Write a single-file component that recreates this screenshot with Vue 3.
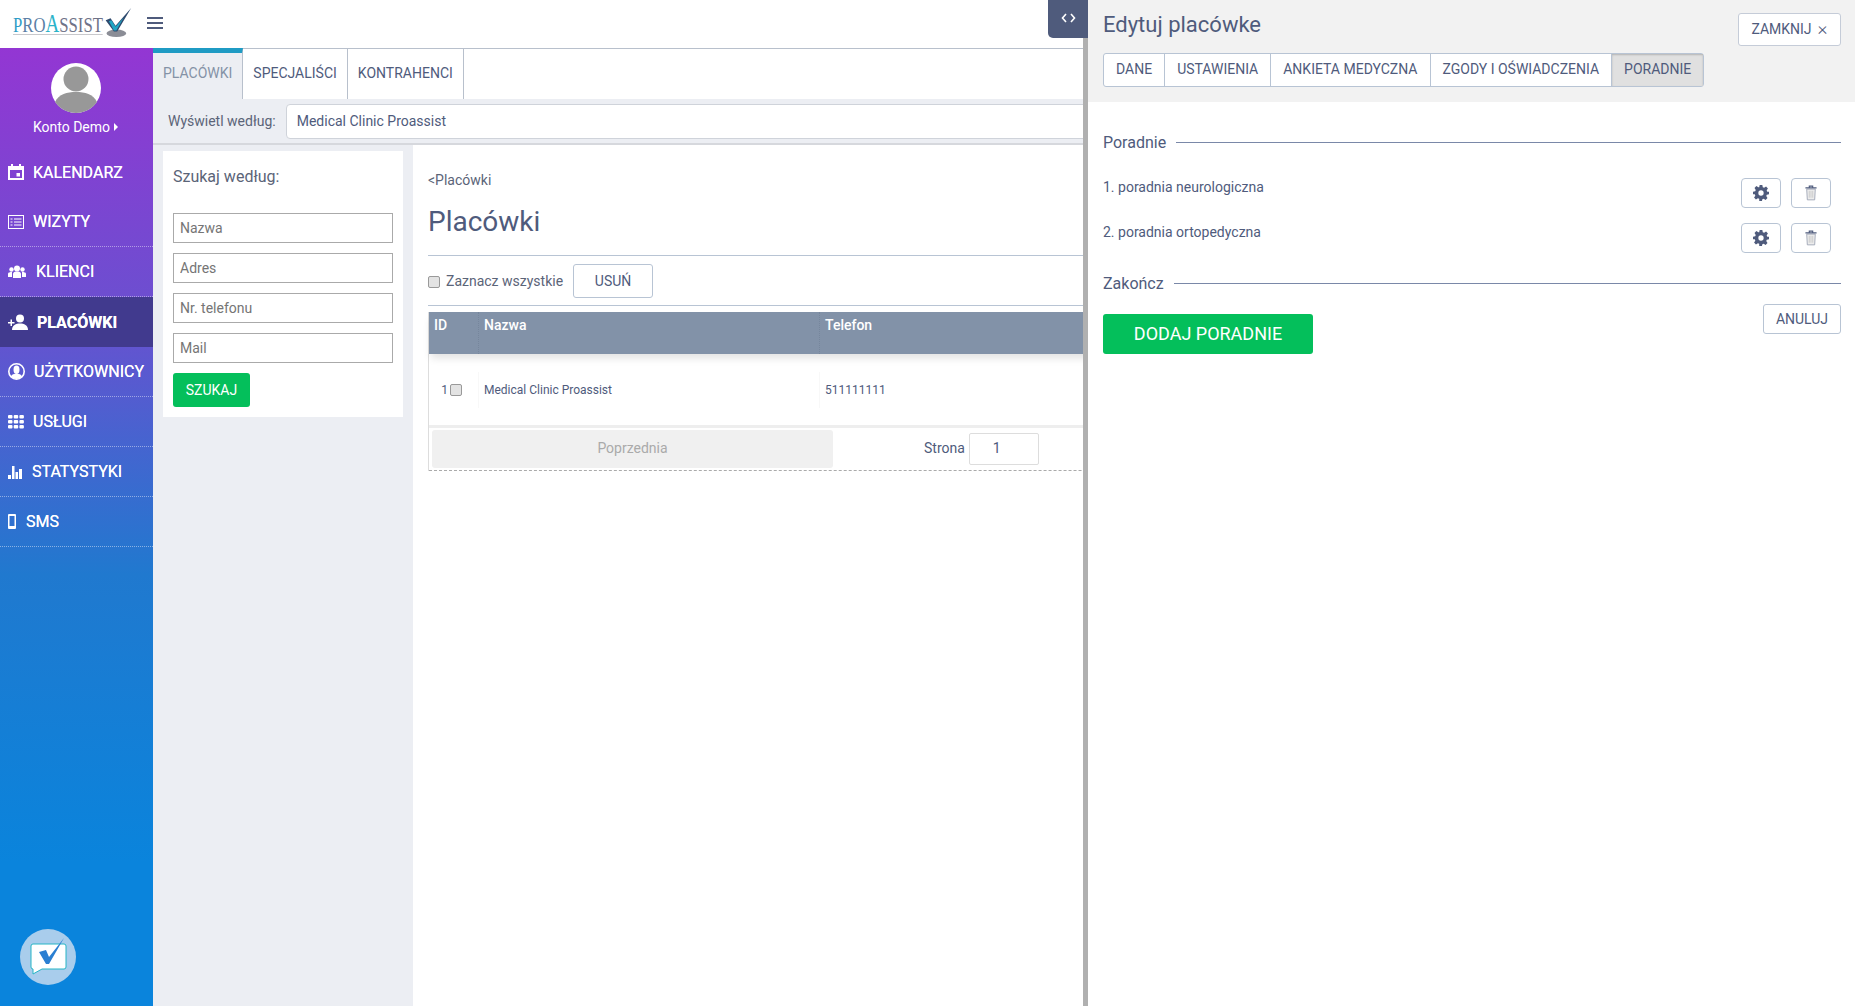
<script setup>
const navItems = [
  { label: 'KALENDARZ', icon: 'calendar', gap: 9 },
  { label: 'WIZYTY', icon: 'list', gap: 9 },
  { label: 'KLIENCI', icon: 'group', gap: 10 },
  { label: 'PLACÓWKI', icon: 'userplus', gap: 9, active: true },
  { label: 'UŻYTKOWNICY', icon: 'user', gap: 9 },
  { label: 'USŁUGI', icon: 'grid', gap: 9 },
  { label: 'STATYSTYKI', icon: 'chart', gap: 9 },
  { label: 'SMS', icon: 'phone', gap: 10 }
]
const topTabs = ['PLACÓWKI', 'SPECJALIŚCI', 'KONTRAHENCI']
const searchFields = ['Nazwa', 'Adres', 'Nr. telefonu', 'Mail']
const drawerTabs = ['DANE', 'USTAWIENIA', 'ANKIETA MEDYCZNA', 'ZGODY I OŚWIADCZENIA', 'PORADNIE']
const clinics = ['1. poradnia neurologiczna', '2. poradnia ortopedyczna']
</script>

<template>
  <div class="page">
    <header class="topbar">
      <div class="logo">
        <span class="logo-text"><i>P</i><b>RO</b><i class="big">A</i>SSIST</span>
        <svg class="logo-check" width="28" height="30" viewBox="0 0 34 32" preserveAspectRatio="none">
          <ellipse cx="15" cy="27" rx="12" ry="4" fill="#8b8d96" />
          <path d="M2 13 L8 11 L14 19 L33 0 L16 25 L12 25 Z" fill="#2f4a6e" />
          <path d="M6 14 L9 13 L14 20 L24 10 L15 24 L12 24 Z" fill="#1fa6c4" />
        </svg>
      </div>
      <button class="burger"><span></span><span></span><span></span></button>
    </header>

    <div class="layout">
      <aside class="sidebar">
        <div class="profile">
          <div class="avatar">
            <svg width="50" height="50" viewBox="0 0 50 50">
              <circle cx="25" cy="25" r="25" fill="#fff" />
              <circle cx="25" cy="16" r="12.5" fill="#989898" />
              <path d="M4 39 C8 31 16 29 25 29 C34 29 42 31 46 39 C41 46 33 50 25 50 C17 50 9 46 4 39 Z" fill="#989898" />
            </svg>
          </div>
          <div class="profile-name">Konto Demo<span class="caret"></span></div>
        </div>
        <nav class="nav">
          <a v-for="item in navItems" :key="item.label" class="nav-item" :class="{ active: item.active }">
            <svg v-if="item.icon === 'calendar'" width="16" height="16" viewBox="0 0 16 16" fill="#fff">
              <path fill-rule="evenodd" d="M0 2h3V0h2v2h6V0h2v2h3v14H0z M2 6v8h12V6z" />
              <rect x="8.500" y="9" width="3.500" height="3.500" />
            </svg>
            <svg v-else-if="item.icon === 'list'" width="16" height="16" viewBox="0 0 16 16" fill="none" stroke="#fff">
              <rect x="0.500" y="1.500" width="15" height="13" />
              <path d="M2.500 5h2M6 5h7.500M2.500 8h2M6 8h7.500M2.500 11h2M6 11h7.500" />
            </svg>
            <svg v-else-if="item.icon === 'group'" width="18" height="14" viewBox="0 0 18 14" fill="#fff">
              <circle cx="9" cy="3.500" r="3" />
              <path d="M5 13 V9 C5 7 7 6.500 9 6.500 S13 7 13 9 V13Z" />
              <circle cx="3.500" cy="4.500" r="2.200" />
              <path d="M0 12 V8.500 C0 7.500 2 7 4 7 V12Z" />
              <circle cx="14.500" cy="4.500" r="2.200" />
              <path d="M18 12 V8.500 C18 7.500 16 7 14 7 V12Z" />
            </svg>
            <svg v-else-if="item.icon === 'userplus'" width="20" height="16" viewBox="0 0 20 16" fill="#fff">
              <circle cx="12" cy="4.500" r="4" />
              <path d="M4 16 C4 11 8 9.500 12 9.500 S20 11 20 16Z" />
              <path d="M2.500 5.500h1.500v2.500h2.500v1.500h-2.500v2.500h-1.500v-2.500h-2.500v-1.500h2.500z" />
            </svg>
            <svg v-else-if="item.icon === 'user'" width="17" height="17" viewBox="0 0 17 17">
              <circle cx="8.500" cy="8.500" r="7.700" fill="none" stroke="#fff" stroke-width="1.600" />
              <ellipse cx="8.500" cy="6.800" rx="3" ry="4.200" fill="#fff" />
              <path d="M2.800 13.500c1-2 3-2.700 5.700-2.700s4.700.7 5.700 2.700c-1.500 1.600-3.500 2.500-5.700 2.500s-4.200-.9-5.700-2.500z" fill="#fff" />
            </svg>
            <svg v-else-if="item.icon === 'grid'" width="16" height="14" viewBox="0 0 16 14" fill="#fff">
              <rect x="0" y="0" width="4.500" height="3.500" rx="1" />
              <rect x="5.700" y="0" width="4.500" height="3.500" rx="1" />
              <rect x="11.400" y="0" width="4.500" height="3.500" rx="1" />
              <rect x="0" y="5" width="4.500" height="3.500" rx="1" />
              <rect x="5.700" y="5" width="4.500" height="3.500" rx="1" />
              <rect x="11.400" y="5" width="4.500" height="3.500" rx="1" />
              <rect x="0" y="10" width="4.500" height="3.500" rx="1" />
              <rect x="5.700" y="10" width="4.500" height="3.500" rx="1" />
              <rect x="11.400" y="10" width="4.500" height="3.500" rx="1" />
            </svg>
            <svg v-else-if="item.icon === 'chart'" width="15" height="14" viewBox="0 0 15 14" fill="#fff">
              <rect x="0" y="10" width="3" height="4" />
              <rect x="4" y="1" width="2.500" height="13" />
              <rect x="7.500" y="7" width="2.500" height="7" />
              <rect x="11" y="4" width="3" height="10" />
            </svg>
            <svg v-else width="8" height="15" viewBox="0 0 8 15">
              <path fill="#fff" fill-rule="evenodd" d="M1 0h6a1 1 0 0 1 1 1v13a1 1 0 0 1-1 1H1a1 1 0 0 1-1-1V1a1 1 0 0 1 1-1z M1.500 2v10h5V2z" />
            </svg>
            <span :style="{ marginLeft: item.gap + 'px' }">{{ item.label }}</span>
          </a>
        </nav>
        <div class="chat-badge">
          <svg width="56" height="56" viewBox="0 0 56 56">
            <circle cx="28" cy="28" r="28" fill="#a9cdec" />
            <path d="M13 15 H44 a2 2 0 0 1 2 2 V38 a2 2 0 0 1 -2 2 H22 L13 45 V40 a2 2 0 0 1 -2 -2 V17 a2 2 0 0 1 2 -2 Z" fill="#fff" stroke="#27b5c6" />
            <path d="M19 23 L26 21 L29 28 L44 9 L29 35 L26 35 Z" fill="#2a7fd2" />
          </svg>
        </div>
      </aside>

      <main class="main">
        <div class="tabs">
          <a v-for="(tab, i) in topTabs" :key="tab" class="tab" :class="{ current: i === 0 }">{{ tab }}</a>
        </div>
        <div class="filter">
          <label>Wyświetl według:</label>
          <div class="select">Medical Clinic Proassist</div>
        </div>
        <div class="columns">
          <section class="search-col">
            <div class="search-panel">
              <h4>Szukaj według:</h4>
              <div class="search-fields">
                <input v-for="field in searchFields" :key="field" type="text" :placeholder="field" />
              </div>
              <button class="btn-green">SZUKAJ</button>
            </div>
          </section>
          <section class="content">
            <a class="back">&lt;Placówki</a>
            <h1>Placówki</h1>
            <div class="bulk">
              <span class="check"></span>
              <span class="bulk-label">Zaznacz wszystkie</span>
              <button class="btn-outline">USUŃ</button>
            </div>
            <div class="table">
              <div class="thead">
                <div class="c-id">ID</div>
                <div class="c-name">Nazwa</div>
                <div class="c-phone">Telefon</div>
              </div>
              <div class="trow">
                <div class="c-id"><span>1</span><span class="check"></span></div>
                <div class="c-name">Medical Clinic Proassist</div>
                <div class="c-phone">511111111</div>
              </div>
              <div class="pager">
                <button class="prev">Poprzednia</button>
                <div class="pager-page">
                  <span>Strona</span>
                  <div class="page-input">1</div>
                </div>
              </div>
            </div>
          </section>
        </div>
      </main>
    </div>

    <div class="drawer-toggle">
      <svg width="15" height="10" viewBox="0 0 15 10" fill="none" stroke="#fff" stroke-width="1.600">
        <path d="M5 1 L1.500 5 L5 9 M10 1 L13.500 5 L10 9" />
      </svg>
    </div>
    <aside class="drawer">
      <div class="drawer-head">
        <div class="drawer-title-row">
          <h2>Edytuj placówke</h2>
          <button class="btn-close">ZAMKNIJ <span>×</span></button>
        </div>
        <div class="drawer-tabs">
          <a v-for="tab in drawerTabs" :key="tab" class="drawer-tab" :class="{ current: tab === 'PORADNIE' }">{{ tab }}</a>
        </div>
      </div>
      <div class="drawer-body">
        <div class="legend"><span>Poradnie</span><i></i></div>
        <div class="clinics">
          <div v-for="clinic in clinics" :key="clinic" class="clinic">
            <span class="clinic-name">{{ clinic }}</span>
            <button class="icon-btn">
              <svg width="16" height="16" viewBox="0 0 18 18">
                <path fill="#4f5b7c" fill-rule="evenodd" d="M7.500 0h3l.5 2.500 1.500.6 2.200-1.400 2.100 2.100-1.400 2.200.6 1.500L18 7.500v3l-2.500.5-.6 1.500 1.400 2.200-2.100 2.100-2.200-1.400-1.500.6-.5 2.500h-3L7 15.500l-1.500-.6-2.200 1.400-2.100-2.100 1.400-2.200-.6-1.500L0 10.500v-3l2.500-.5.6-1.500-1.400-2.200 2.100-2.100 2.200 1.400L7 2.500z M9 6a3 3 0 1 0 0 6 3 3 0 0 0 0-6z" />
              </svg>
            </button>
            <button class="icon-btn">
              <svg width="12" height="16" viewBox="0 0 14 18">
                <path fill="#ececec" stroke="#9aa2b2" d="M2 4.500h10l-.7 12.500H2.700z" />
                <path stroke="#4f5b7c" stroke-width="1.300" d="M0.500 3h13M5 3V1h4v2" fill="none" />
                <path stroke="#c8c8c8" d="M5 6.500v8M7 6.500v8M9 6.500v8" />
              </svg>
            </button>
          </div>
        </div>
        <div class="legend legend-end"><span>Zakończ</span><i></i></div>
        <div class="drawer-actions">
          <button class="btn-add">DODAJ PORADNIE</button>
          <button class="btn-cancel">ANULUJ</button>
        </div>
      </div>
    </aside>
  </div>
</template>

<style>
html, body {
  margin: 0;
  padding: 0;
  overflow: hidden;
}
</style>

<style scoped>
.page {
  position: relative;
  width: 1855px;
  height: 1006px;
  overflow: hidden;
  font-family: Roboto, "Liberation Sans", sans-serif;
  font-size: 14px;
  color: #4f5b7c;
  background: #fff;
}

button {
  font-family: inherit;
  cursor: pointer;
}

.topbar {
  height: 48px;
  display: flex;
  align-items: center;
  background: #fff;
}

.logo {
  width: 131px;
  margin-left: 13px;
  height: 48px;
  display: flex;
  align-items: center;
  position: relative;
}

.logo-text {
  font-family: "Liberation Serif", serif;
  font-size: 22px;
  color: #6f7388;
  border-bottom: 1px solid #c8c8cc;
  line-height: 18px;
  margin-top: 3px;
  white-space: nowrap;
  transform: scaleX(0.76);
  transform-origin: left center;
}

.logo-text i {
  font-style: normal;
  color: #2f9cc7;
}

.logo-text b {
  font-weight: 400;
  color: #5b7fa6;
}

.logo-text .big {
  font-size: 25px;
  line-height: 0;
  color: #2bb3c9;
}

.logo-check {
  position: absolute;
  left: 91px;
  top: 8px;
}

.burger {
  margin-left: 3px;
  margin-bottom: 3px;
  width: 16px;
  height: 12px;
  padding: 0;
  border: 0;
  background: none;
  display: flex;
  flex-direction: column;
  justify-content: space-between;
}

.burger span {
  display: block;
  height: 2px;
  background: #4f5b7c;
}

.layout {
  display: flex;
  height: 958px;
}

.sidebar {
  width: 153px;
  flex-shrink: 0;
  display: flex;
  flex-direction: column;
  background: linear-gradient(#9336d3 0%, #6a50d0 28%, #2079cf 55%, #0a84dc 85%);
  color: #fff;
}

.profile {
  height: 99px;
  box-sizing: border-box;
  padding: 15px 2px 0 0;
  text-align: center;
}

.avatar {
  height: 50px;
}

.avatar svg {
  display: block;
  margin: 0 auto;
}

.profile-name {
  margin-top: 4px;
  font-size: 14px;
  line-height: 20px;
  display: flex;
  justify-content: center;
  align-items: center;
}

.caret {
  margin-left: 4px;
  border-left: 4px solid #fff;
  border-top: 4px solid transparent;
  border-bottom: 4px solid transparent;
}

.nav-item {
  height: 50px;
  box-sizing: border-box;
  padding-left: 8px;
  display: flex;
  align-items: center;
  font-size: 16px;
  border-bottom: 1px dotted rgba(255, 255, 255, 0.45);
  text-shadow: 0 0 0.5px #fff;
}

.nav-item:nth-child(1) {
  border-bottom: 0;
}

.nav-item.active {
  background: #413a8e;
  font-weight: 700;
  border-bottom: 0;
}

.chat-badge {
  margin-top: auto;
  margin-left: 20px;
  margin-bottom: 21px;
  line-height: 0;
}

.main {
  flex: 1;
  display: flex;
  flex-direction: column;
  background: #eceef3;
}

.tabs {
  height: 51px;
  display: flex;
  border-top: 1px solid #b8c0cc;
  box-sizing: border-box;
}

.tab {
  box-sizing: border-box;
  height: 50px;
  padding: 0 10px 2px;
  display: flex;
  align-items: center;
  background: #fff;
  border-right: 1px solid #b8c0cc;
  color: #4f5b7c;
}

.tabs::after {
  content: "";
  flex: 1;
  background: #fff;
}

.tab.current {
  background: #eceef3;
  color: #8492a6;
  border-top: 5px solid #1f9bc4;
  margin-top: -1px;
  height: 51px;
  padding-bottom: 6px;
}

.filter {
  height: 46px;
  box-sizing: border-box;
  display: flex;
  align-items: center;
  padding-left: 15px;
  border-bottom: 2px solid #d6d8dd;
  gap: 10px;
}

.filter label {
  color: #5b6478;
}

.select {
  flex: 1;
  height: 35px;
  line-height: 33px;
  box-sizing: border-box;
  padding-left: 10px;
  background: #fff;
  border: 1px solid #cfd3da;
  border-radius: 4px;
}

.columns {
  flex: 1;
  display: flex;
  min-height: 0;
}

.search-col {
  width: 260px;
  flex-shrink: 0;
  box-sizing: border-box;
  padding: 6px 10px;
}

.search-panel {
  height: 266px;
  box-sizing: border-box;
  padding: 16px 10px 0;
  background: #fff;
  color: #5b6478;
}

.search-panel h4 {
  margin: 0;
  height: 46px;
  font-size: 16px;
  font-weight: 400;
  line-height: 20px;
}

.search-fields {
  display: flex;
  flex-direction: column;
  gap: 10px;
}

.search-fields input {
  height: 30px;
  box-sizing: border-box;
  padding: 0 6px;
  border: 1px solid #aaa;
  font-family: inherit;
  font-size: 14px;
  outline: none;
}

.search-fields input::placeholder {
  color: #757575;
  opacity: 1;
}

.btn-green {
  margin-top: 10px;
  width: 77px;
  height: 34px;
  padding: 0;
  border: 0;
  border-radius: 3px;
  background: #04bf5b;
  color: #fff;
  font-size: 14px;
}

.content {
  flex: 1;
  background: #fff;
  padding: 25px 15px 0;
}

.back {
  display: block;
  line-height: 20px;
  font-size: 14px;
  color: #5b6478;
}

.content h1 {
  margin: 12px 0 0;
  padding-bottom: 14px;
  font-size: 28px;
  font-weight: 400;
  line-height: 39px;
  border-bottom: 1px solid #b8c4d4;
}

.bulk {
  height: 49px;
  display: flex;
  align-items: center;
  border-bottom: 1px solid #b8c4d4;
}

.check {
  display: inline-block;
  width: 12px;
  height: 12px;
  box-sizing: border-box;
  border: 1px solid #999;
  border-radius: 2px;
  background: #e3e3e3;
}

.bulk .check {
  margin-top: 2px;
}

.bulk-label {
  margin-left: 6px;
  color: #5b6478;
}

.btn-outline {
  margin-left: 10px;
  width: 80px;
  height: 34px;
  padding: 0;
  background: #fff;
  border: 1px solid #b8c4d4;
  border-radius: 3px;
  color: #4f5b7c;
  font-size: 14px;
}

.table {
  margin-top: 6px;
  width: 1412px;
  border-left: 1px solid #ddd;
  font-size: 14px;
}

.thead {
  display: flex;
  height: 42px;
  background: #8292a8;
  color: #fff;
  box-shadow: 0 6px 8px -2px rgba(0, 0, 0, 0.12);
  font-weight: 500;
  position: relative;
}

.thead > div {
  padding: 5px 5px 0;
  box-sizing: border-box;
}

.thead .c-id,
.thead .c-name {
  border-right: 1px dotted #76869c;
}

.c-id {
  width: 50px;
  flex-shrink: 0;
}

.c-name {
  width: 341px;
  flex-shrink: 0;
}

.trow {
  display: flex;
  align-items: center;
  height: 71px;
  font-size: 12px;
  border-bottom: 3px solid #eee;
}

.trow > div {
  box-sizing: border-box;
  padding: 0 5px;
  line-height: 36px;
}

.trow .c-id {
  display: flex;
  align-items: center;
  justify-content: flex-end;
  gap: 2px;
  padding-right: 16px;
  border-right: 1px solid #f8f8f8;
}

.trow .c-name {
  border-right: 1px solid #f8f8f8;
}

.pager {
  height: 43px;
  box-sizing: border-box;
  display: flex;
  align-items: center;
  padding: 0 3px 1px;
  border-bottom: 1px dashed #aaa;
}

.prev {
  width: 401px;
  height: 38px;
  padding-bottom: 2px;
  border: 0;
  border-radius: 3px;
  background: #f0f0f0;
  color: #aaa;
  font-size: 14px;
}

.pager-page {
  margin-left: 91px;
  display: flex;
  align-items: center;
  gap: 4px;
}

.pager-page > span {
  margin-bottom: 2px;
}

.page-input {
  width: 70px;
  height: 32px;
  line-height: 28px;
  box-sizing: border-box;
  padding-left: 23px;
  border: 1px solid #ddd;
  border-radius: 2px;
}

.drawer-toggle {
  position: absolute;
  z-index: 2;
  left: 1048px;
  top: 0;
  width: 40px;
  height: 38px;
  display: flex;
  align-items: center;
  justify-content: center;
  padding-bottom: 2px;
  box-sizing: border-box;
  background: #4f5b7c;
  border-bottom-left-radius: 5px;
}

.drawer {
  position: absolute;
  z-index: 1;
  left: 1088px;
  top: 0;
  width: 767px;
  height: 1006px;
  background: #fff;
  box-shadow: -5px 0 0 #b0b0b0;
}

.drawer-head {
  height: 102px;
  box-sizing: border-box;
  padding: 13px 14px 0 15px;
  background: #f2f2f2;
}

.drawer-title-row {
  display: flex;
  justify-content: space-between;
  align-items: flex-start;
  height: 40px;
}

.drawer-title-row h2 {
  margin: 0;
  font-size: 22px;
  font-weight: 400;
  line-height: 24px;
}

.btn-close {
  width: 103px;
  height: 33px;
  padding: 0 0 2px;
  background: #fff;
  border: 1px solid #c5ccd8;
  border-radius: 3px;
  color: #4f5b7c;
  font-size: 14px;
  display: flex;
  align-items: center;
  justify-content: center;
}

.btn-close span {
  margin-left: 6px;
  font-size: 19px;
  font-weight: 300;
  line-height: 1;
}

.drawer-tabs {
  display: inline-flex;
  height: 34px;
  box-sizing: border-box;
  background: #fff;
  border: 1px solid #b8c4d4;
  border-radius: 3px;
}

.drawer-tab {
  padding: 0 12px;
  line-height: 30px;
  border-right: 1px solid #b8c4d4;
}

.drawer-tab:last-child {
  border-right: 0;
}

.drawer-tab.current {
  background: #e0e0e0;
  box-shadow: inset 0 1px 2px rgba(0, 0, 0, 0.2);
}

.drawer-body {
  padding: 30px 14px 0 15px;
}

.legend {
  display: flex;
  align-items: center;
  gap: 10px;
  height: 20px;
  font-size: 16px;
}

.legend i {
  flex: 1;
  height: 1px;
  background: #7a88a8;
}

.clinics {
  margin-top: 26px;
  display: flex;
  flex-direction: column;
  gap: 15px;
}

.clinic {
  height: 30px;
  display: flex;
  gap: 10px;
  padding-right: 10px;
}

.clinic-name {
  flex: 1;
  line-height: 18px;
}

.icon-btn {
  width: 40px;
  height: 30px;
  padding: 0;
  background: #fff;
  border: 1px solid #b8c4d4;
  border-radius: 4px;
  display: flex;
  align-items: center;
  justify-content: center;
}

.legend-end {
  margin-top: 20px;
}

.drawer-actions {
  display: flex;
  justify-content: space-between;
  align-items: flex-start;
  margin-top: 11px;
}

.btn-add {
  margin-top: 10px;
  width: 210px;
  height: 40px;
  padding: 0 0 2px;
  border: 0;
  border-radius: 3px;
  background: #04bf5b;
  color: #fff;
  font-size: 18px;
}

.btn-cancel {
  width: 78px;
  height: 30px;
  padding: 0;
  background: #fff;
  border: 1px solid #b8c4d4;
  border-radius: 3px;
  color: #4f5b7c;
  font-size: 14px;
}
</style>
